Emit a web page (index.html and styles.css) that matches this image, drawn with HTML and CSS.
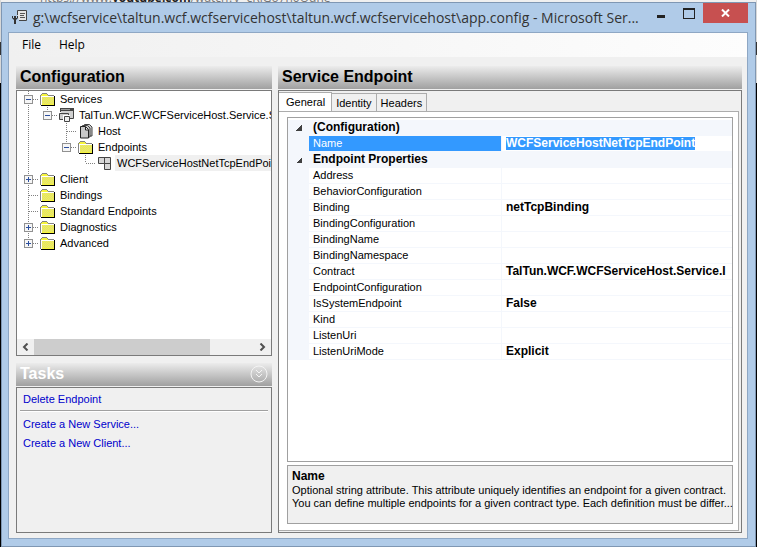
FILE: index.html
```html
<!DOCTYPE html>
<html lang="en">
<head>
    <meta charset="UTF-8">
    <title>Service Configuration Editor</title>
    <link rel="stylesheet" href="styles.css">
</head>
<body>
    <svg class="symbols" width="0" height="0" aria-hidden="true">
        <defs>
            <symbol id="folder" viewBox="0 0 16 13">
                <path d="M1 12V2h1V1h5v1h1v1h6v9z" fill="#f6f43c"/>
                <path d="M2 5.500h12M2 7.500h12M2 9.500h12" stroke="#dcdc88" stroke-dasharray="1 1"/>
                <path d="M3 4.500h11M3 6.500h11M3 8.500h11M3 10.500h11" stroke="#dcdc88" stroke-dasharray="1 1"/>
                <path d="M0 12V2h1V1h1V0h5v1h1v1h6v1H8V2H7V1H2v1H1v10z" fill="#848484"/>
                <path d="M1 3h13v1H2v8H1z" fill="#fff"/>
                <path d="M14 3h1v10H1v-1h13z" fill="#000"/>
            </symbol>
            <symbol id="service" viewBox="0 0 16 14">
                <path d="M1.500 4V.5h13v10H10" fill="#d0d0d0" stroke="#444"/>
                <path d="M1 0h14v3H1z" fill="#444"/>
                <path d="M2 1h9v1H2z" fill="#999"/>
                <path d="M.5 5.500h9v6h-9z" fill="#ccc" stroke="#444"/>
                <path d="M4 7h7v6H4z" fill="#fff"/>
                <path d="M5.500 8.500h5v5h-5z" fill="#eee" stroke="#444"/>
            </symbol>
            <symbol id="host" viewBox="0 0 14 15">
                <path d="M5.500.5h5l2.500 2.500v9H5.500z" fill="#ccc" stroke="#444"/>
                <path d="M3.500 1.500h5l2.500 2.500v9H3.500z" fill="#ccc" stroke="#444"/>
                <path d="M1.500 2.500h5l3 3v8.500h-8z" fill="#c8c8c8" stroke="#222"/>
                <path d="M6.500 3v3H9" fill="#fff" stroke="#222"/>
            </symbol>
            <symbol id="endpoint" viewBox="0 0 14 13">
                <path d="M.5.5h12v12h-6v-6h-6z" fill="#d6d6d6" stroke="#444"/>
                <path d="M6.500.5v6h6" fill="none" stroke="#444"/>
            </symbol>
        </defs>
    </svg>

    <div class="behind">https://www.<b>youtube.com</b>/watch?v=cRiGo7h0Oune</div>

    <div class="window">
        <header class="titlebar">
            <svg class="app-icon" width="16" height="16" viewBox="0 0 16 16">
                <path d="M5.500 6V1.500h9v10H7" fill="#e4e4e4" stroke="#444"/>
                <path d="M8 4.500h5M8 6.500h4M8 8.500h5" stroke="#555"/>
                <path d="M0 7v2l2 2v4h2v-4l2-2V7H5v2H4V7H2v2H1V7z" fill="#333"/>
            </svg>
            <h1 class="caption">g:\wcfservice\taltun.wcf.wcfservicehost\taltun.wcf.wcfservicehost\app.config - Microsoft Ser...</h1>
            <div class="window-buttons">
                <button class="minimize" type="button" aria-label="Minimize"></button>
                <button class="maximize" type="button" aria-label="Maximize"></button>
                <button class="close" type="button" aria-label="Close">
                    <svg width="9" height="8" viewBox="0 0 9 8"><path d="M1 .5l7 7M8 .5l-7 7" stroke="#fff" stroke-width="2"/></svg>
                </button>
            </div>
        </header>

        <div class="client">
            <nav class="menu">
                <button type="button">File</button>
                <button type="button">Help</button>
            </nav>

            <div class="panes">
                <div class="left">
                    <section class="pane config">
                        <h2 class="pane-title">Configuration</h2>
                        <div class="box tree-box">
                            <ul class="tree">
                                <li>
                                    <div class="node"><button class="toggle minus" type="button" aria-label="Collapse"></button><svg class="icon" width="16" height="13"><use href="#folder"/></svg><span>Services</span></div>
                                    <ul>
                                        <li class="last">
                                            <div class="node"><button class="toggle minus" type="button" aria-label="Collapse"></button><svg class="icon" width="16" height="14"><use href="#service"/></svg><span>TalTun.WCF.WCFServiceHost.Service.S</span></div>
                                            <ul>
                                                <li><div class="node leaf"><svg class="icon" width="14" height="15"><use href="#host"/></svg><span>Host</span></div></li>
                                                <li class="last">
                                                    <div class="node"><button class="toggle minus" type="button" aria-label="Collapse"></button><svg class="icon" width="16" height="13"><use href="#folder"/></svg><span>Endpoints</span></div>
                                                    <ul>
                                                        <li class="last"><div class="node leaf"><svg class="icon" width="14" height="13"><use href="#endpoint"/></svg><span class="selected">WCFServiceHostNetTcpEndPoint</span></div></li>
                                                    </ul>
                                                </li>
                                            </ul>
                                        </li>
                                    </ul>
                                </li>
                                <li><div class="node"><button class="toggle plus" type="button" aria-label="Expand"></button><svg class="icon" width="16" height="13"><use href="#folder"/></svg><span>Client</span></div></li>
                                <li><div class="node leaf"><svg class="icon" width="16" height="13"><use href="#folder"/></svg><span>Bindings</span></div></li>
                                <li><div class="node leaf"><svg class="icon" width="16" height="13"><use href="#folder"/></svg><span>Standard Endpoints</span></div></li>
                                <li><div class="node"><button class="toggle plus" type="button" aria-label="Expand"></button><svg class="icon" width="16" height="13"><use href="#folder"/></svg><span>Diagnostics</span></div></li>
                                <li class="last"><div class="node"><button class="toggle plus" type="button" aria-label="Expand"></button><svg class="icon" width="16" height="13"><use href="#folder"/></svg><span>Advanced</span></div></li>
                            </ul>
                            <div class="scrollbar">
                                <button type="button" aria-label="Scroll left"><svg width="7" height="8" viewBox="0 0 7 8"><path d="M5.500.5L2 4l3.500 3.500" fill="none" stroke="#505050" stroke-width="2"/></svg></button>
                                <div class="track"><div class="thumb"></div></div>
                                <button type="button" aria-label="Scroll right"><svg width="7" height="8" viewBox="0 0 7 8"><path d="M1.500.5L5 4 1.500 7.500" fill="none" stroke="#505050" stroke-width="2"/></svg></button>
                            </div>
                        </div>
                    </section>

                    <section class="pane tasks">
                        <div class="pane-title">
                            <h2>Tasks</h2>
                            <button class="chevron" type="button" aria-label="Collapse tasks">
                                <svg width="18" height="18" viewBox="0 0 18 18" fill="none" stroke="#f4f4f4">
                                    <circle cx="9" cy="9" r="8"/>
                                    <path d="M6 5l3 3 3-3M6 9l3 3 3-3"/>
                                </svg>
                            </button>
                        </div>
                        <div class="box task-list">
                            <a href="#delete">Delete Endpoint</a>
                            <hr>
                            <a href="#service">Create a New Service...</a>
                            <a href="#client">Create a New Client...</a>
                        </div>
                    </section>
                </div>

                <section class="pane right">
                    <h2 class="pane-title">Service Endpoint</h2>
                    <div class="box tab-box">
                        <div class="tabs">
                            <button class="tab active" type="button">General</button>
                            <button class="tab" type="button">Identity</button>
                            <button class="tab" type="button">Headers</button>
                        </div>
                        <div class="tab-page">
                            <div class="grid-box">
                                <table class="grid">
                                    <colgroup>
                                        <col class="col-margin">
                                        <col class="col-name">
                                        <col>
                                    </colgroup>
                                    <tr class="category"><th><i class="arrow"></i></th><td colspan="2">(Configuration)</td></tr>
                                    <tr class="current"><th></th><td><label for="name">Name</label></td><td><input id="name" class="edit" type="text" value="WCFServiceHostNetTcpEndPoint"></td></tr>
                                    <tr class="category"><th><i class="arrow"></i></th><td colspan="2">Endpoint Properties</td></tr>
                                    <tr><th></th><td>Address</td><td></td></tr>
                                    <tr><th></th><td>BehaviorConfiguration</td><td></td></tr>
                                    <tr><th></th><td>Binding</td><td>netTcpBinding</td></tr>
                                    <tr><th></th><td>BindingConfiguration</td><td></td></tr>
                                    <tr><th></th><td>BindingName</td><td></td></tr>
                                    <tr><th></th><td>BindingNamespace</td><td></td></tr>
                                    <tr><th></th><td>Contract</td><td>TalTun.WCF.WCFServiceHost.Service.I</td></tr>
                                    <tr><th></th><td>EndpointConfiguration</td><td></td></tr>
                                    <tr><th></th><td>IsSystemEndpoint</td><td>False</td></tr>
                                    <tr><th></th><td>Kind</td><td></td></tr>
                                    <tr><th></th><td>ListenUri</td><td></td></tr>
                                    <tr><th></th><td>ListenUriMode</td><td>Explicit</td></tr>
                                </table>
                            </div>
                            <div class="help">
                                <h3>Name</h3>
                                <p>Optional string attribute. This attribute uniquely identifies an endpoint for a given contract.<br>You can define multiple endpoints for a given contract type. Each definition must be differ...</p>
                            </div>
                        </div>
                    </div>
                </section>
            </div>
        </div>
    </div>
</body>
</html>
```
FILE: styles.css
```css
* {
    box-sizing: border-box;
}
body {
    margin: 0;
    height: 100vh;
    display: flex;
    flex-direction: column;
    padding: 0 1px;
    background: linear-gradient(#d8d8d8 42px, #333 42px 55px, #d8d8d8 55px 83px, #000 83px);
    font: 11px/16px "Liberation Sans", Arial, sans-serif;
    color: #000;
}
h1, h2, h3, p, ul {
    margin: 0;
    padding: 0;
}
button {
    border: 0;
    padding: 0;
    background: none;
    font: inherit;
    color: inherit;
}
.symbols {
    position: absolute;
}

/* address bar of the browser under the window */
.behind {
    display: flex;
    align-items: flex-end;
    height: 2px;
    flex: none;
    padding-left: 39px;
    overflow: hidden;
    background: #f0f0f0;
    font: 12px/9px "Open Sans", sans-serif;
    color: #777;
}
.behind b {
    color: #222;
}

/* window frame */
.window {
    flex: 1;
    min-height: 0;
    display: flex;
    flex-direction: column;
    padding: 0 7px 7px 6px;
    background: #b0cbe8;
    border: 1px solid #7f97b3;
}
.titlebar {
    display: flex;
    height: 29px;
    flex: none;
    padding-left: 4px;
}
.app-icon {
    flex: none;
    margin: 6px 5px 0 0;
}
.caption {
    flex: 1;
    min-width: 0;
    white-space: nowrap;
    font: 14px/29px "Open Sans", sans-serif;
    color: #333;
}
.window-buttons {
    display: flex;
    flex: none;
}
.window-buttons button {
    width: 28px;
    height: 20px;
    display: flex;
    align-items: center;
    justify-content: center;
}
.window-buttons .minimize::before {
    content: "";
    width: 8px;
    height: 3px;
    margin-top: 6px;
    background: #222;
}
.window-buttons .maximize::before {
    content: "";
    width: 10px;
    height: 8px;
    border: 1px solid #222;
    border-top-width: 2px;
}
.window-buttons .close {
    width: 45px;
    background: #c75050;
}
.client {
    flex: 1;
    min-height: 0;
    display: flex;
    flex-direction: column;
    border: 1px solid #8ea7c4;
    background: #f0f0f0;
}
.menu {
    display: flex;
    gap: 18px;
    height: 24px;
    flex: none;
    padding-left: 13px;
    background: linear-gradient(to right, #f0f0f0, #fdfdfd);
    font: 12px/24px "Open Sans", sans-serif;
}

/* panes */
.panes {
    flex: 1;
    min-height: 0;
    display: grid;
    grid-template-columns: 256px 1fr;
    gap: 6px;
    padding: 9px 5px 5px 7px;
}
.left {
    display: flex;
    flex-direction: column;
    gap: 7px;
    min-height: 0;
}
.pane {
    display: flex;
    flex-direction: column;
    gap: 1px;
    min-width: 0;
    min-height: 0;
}
.config {
    flex: 290;
}
.tasks {
    flex: 170;
}
.pane-title {
    display: flex;
    align-items: center;
    justify-content: space-between;
    height: 23px;
    flex: none;
    padding: 0 4px 2px;
    background: linear-gradient(#ececec, #a0a0a0);
    font: bold 16px/21px "Liberation Sans", Arial, sans-serif;
}
.pane-title h2 {
    font: inherit;
    color: #fff;
}
.chevron {
    height: 18px;
}
.box {
    flex: 1;
    min-height: 0;
    border: 1px solid #7a7a7a;
}

/* tree */
.tree-box {
    display: flex;
    flex-direction: column;
    justify-content: space-between;
    overflow: hidden;
    background: #fff;
}
.tree {
    padding-left: 6px;
    white-space: nowrap;
}
.tree ul {
    padding-left: 19px;
}
.tree li {
    list-style: none;
    background: repeating-linear-gradient(#808080 0 1px, transparent 1px 2px) 5px 0 / 1px 100% no-repeat;
}
.tree li.last {
    background-size: 1px 8px;
}
.node {
    display: flex;
    align-items: center;
    height: 16px;
    background: repeating-linear-gradient(to right, #808080 0 1px, transparent 1px 2px) 6px 8px / 10px 1px no-repeat;
}
.toggle {
    width: 9px;
    height: 9px;
    flex: none;
    margin: 0 7px 0 1px;
    border: 1px solid #919191;
    background: linear-gradient(#2c4f9e, #2c4f9e) 1px 3px / 5px 1px no-repeat, #f6f6f6;
}
.plus {
    background: linear-gradient(#2c4f9e, #2c4f9e) 1px 3px / 5px 1px no-repeat, linear-gradient(#2c4f9e, #2c4f9e) 3px 1px / 1px 5px no-repeat, #f6f6f6;
}
.leaf {
    padding-left: 17px;
}
.icon {
    flex: none;
    width: 16px;
}
.node span {
    margin-left: 2px;
    padding: 0 2px;
}
.node .selected {
    background: #f0f0f0;
}
.scrollbar {
    display: flex;
    height: 16px;
    background: #f0f0f0;
}
.scrollbar button {
    display: flex;
    width: 17px;
    align-items: center;
    justify-content: center;
}
.track {
    flex: 1;
}
.thumb {
    width: 80%;
    height: 100%;
    background: #cdcdcd;
}

/* tasks */
.task-list {
    display: flex;
    flex-direction: column;
    align-items: flex-start;
    gap: 3px;
    padding: 3px;
}
.task-list a {
    padding-left: 3px;
    color: #00c;
    text-decoration: none;
}
.task-list hr {
    width: 100%;
    margin: 0 0 1px;
    border: 0;
    border-top: 1px solid #a0a0a0;
    border-bottom: 1px solid #fff;
}

/* tabs */
.tab-box {
    display: flex;
    flex-direction: column;
    padding: 1px 2px 1px 0;
}
.tabs {
    display: flex;
    align-items: flex-end;
    height: 19px;
    flex: none;
}
.tab {
    height: 18px;
    padding: 0 4px;
    border: 1px solid #acacac;
    border-width: 1px 1px 0 0;
    line-height: 18px;
}
.tab.active {
    height: 20px;
    padding: 0 6px 2px 7px;
    margin-bottom: -1px;
    background: #fff;
}
.tab-page {
    flex: 1;
    min-height: 0;
    display: flex;
    flex-direction: column;
    gap: 3px;
    padding: 5px 5px 6px 8px;
    border: 1px solid #acacac;
    border-left: 0;
    background: #fff;
}
.grid-box {
    flex: 1;
    min-height: 0;
    overflow: hidden;
    border: 1px solid #a0a0a0;
}
.grid {
    width: 100%;
    table-layout: fixed;
    border-spacing: 0;
    margin-top: 2px;
}
.col-margin {
    width: 21px;
}
.col-name {
    width: 192px;
}
.grid th {
    padding: 0;
    background: #f4f7fc;
}
.grid td {
    height: 16px;
    padding: 0 0 0 4px;
    border-bottom: 1px solid #f4f7fc;
    line-height: 15px;
    white-space: nowrap;
    overflow: hidden;
}
.grid td + td {
    border-left: 1px solid #f4f7fc;
    font-weight: bold;
    font-size: 12px;
}
.grid .category td {
    background: #f4f7fc;
    font-weight: bold;
    font-size: 12px;
}
.grid .current td:nth-child(2) {
    background: #3399ff;
    color: #fff;
}
.edit {
    display: block;
    field-sizing: content;
    height: 13px;
    padding: 0;
    border: 0;
    background: #3399ff;
    font: inherit;
    line-height: 13px;
    color: #fff;
}
.arrow {
    display: block;
    width: 6px;
    height: 6px;
    margin-left: 8px;
    background: linear-gradient(135deg, transparent 50%, #404040 50%);
}
.help {
    height: 59px;
    flex: none;
    padding: 2px 4px;
    border: 1px solid #a0a0a0;
    background: #f0f0f0;
    line-height: 13px;
    white-space: nowrap;
}
.help h3 {
    font: bold 12px/16px "Liberation Sans", Arial, sans-serif;
}
```
